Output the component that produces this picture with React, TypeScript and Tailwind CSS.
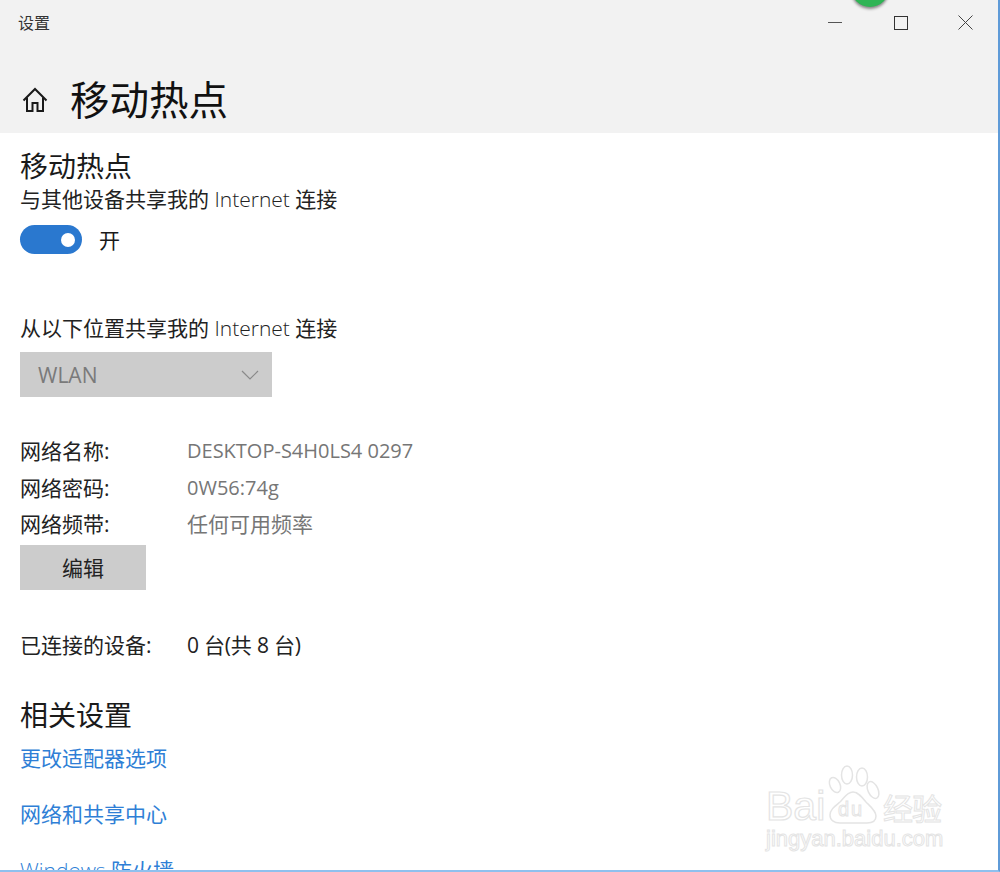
const infoRows = [
  { label: "网络名称:", value: "DESKTOP-S4H0LS4 0297", size: "text-[20px]" },
  { label: "网络密码:", value: "0W56:74g", size: "text-[20px]" },
  { label: "网络频带:", value: "任何可用频率", size: "text-[21px]" },
];

function HomeIcon() {
  return (
    <svg width="26" height="26" viewBox="0 0 26 26" fill="none" stroke="#1a1a1a" strokeWidth="2">
      <path d="M1.5 13.5 13 2l11.500 11.500" />
      <path d="M5 10.500V24h5.500v-8h5v8H21V10.500" />
    </svg>
  );
}

function Watermark() {
  return (
    <div className="pointer-events-none absolute left-[766px] top-[764px] h-[90px] w-[180px] text-transparent">
      <svg className="absolute left-[62px] top-0" width="56" height="64" viewBox="0 0 56 64" fill="none" stroke="#e4e4e4" strokeWidth="1.500">
        <ellipse cx="7" cy="21" rx="5" ry="8" transform="rotate(-25 7 21)" />
        <ellipse cx="19" cy="11" rx="5.500" ry="9" />
        <ellipse cx="34" cy="13" rx="5.500" ry="9" />
        <ellipse cx="45" cy="26" rx="5" ry="9" transform="rotate(-25 45 26)" />
        <path d="M25 28c5 0 9 5 13 10 5 5 10 9 10 14 0 5-4 7-9 7H12c-6 0-10-3-10-8 0-5 4-8 10-13 4-4 7-10 13-10z" />
      </svg>
      <span className="absolute left-0 top-[18px] font-['Liberation_Sans',sans-serif] text-[41px] leading-[48px] [-webkit-text-stroke:1.200px_#e4e4e4]">Bai</span>
      <span className="absolute left-[72px] top-[33px] font-['Liberation_Sans',sans-serif] text-[20px] leading-[24px] tracking-[2px] [-webkit-text-stroke:1px_#e4e4e4]">du</span>
      <span className="absolute left-[117px] top-[25px] font-['Noto_Sans_CJK_SC',sans-serif] text-[30px] leading-[36px] tracking-[-1px] [-webkit-text-stroke:1px_#e4e4e4]">经验</span>
      <span className="absolute left-0 top-[62px] font-['Liberation_Sans',sans-serif] text-[22px] leading-[26px] [-webkit-text-stroke:1px_#e4e4e4]">jingyan.baidu.com</span>
    </div>
  );
}

export default function App() {
  const link = "h-[28px] text-[21px] leading-[28px] text-[#2f7fd6]";

  return (
    <div className="relative h-[872px] w-[1000px] overflow-hidden border-r-2 border-b-2 border-r-[#5f9bd8] border-b-[#8fc0ee] bg-white font-['Open_Sans','Noto_Sans_CJK_SC',sans-serif] font-normal text-[#1a1a1a]">
      {/* green badge peeking in from the top edge */}
      <div className="absolute left-[851px] top-[-31px] h-[38px] w-[38px] rounded-full bg-[#2fb455] shadow-[0_2px_3px_rgba(0,0,0,0.45)]" />

      <header className="h-[133px] bg-[#f2f2f2]">
        <div className="flex h-[45px] items-center justify-between pl-[18px]">
          <span className="text-[16px] leading-[22px] text-[#333]">设置</span>
          <div className="flex items-center">
            <div className="flex h-[45px] w-[66px] items-center justify-center pr-[2px]">
              <div className="h-[1px] w-[14px] bg-[#555]" />
            </div>
            <div className="flex h-[45px] w-[64px] items-center justify-center">
              <div className="h-[14px] w-[14px] border border-[#333]" />
            </div>
            <div className="flex h-[45px] w-[65px] items-center justify-center">
              <svg width="15" height="15" viewBox="0 0 15 15" stroke="#444" strokeWidth="1">
                <path d="M.5.5l14 14M14.500.5l-14 14" />
              </svg>
            </div>
          </div>
        </div>
        <div className="flex h-[88px] items-center pl-[22px] pt-[22px]">
          <HomeIcon />
          <h1 className="ml-[22px] text-[39.500px] leading-[50px] text-[#111]">移动热点</h1>
        </div>
      </header>

      <main className="pl-[20px]">
        <h2 className="pt-[14px] text-[28px] leading-[38px]">移动热点</h2>
        <p className="text-[21px] leading-[28px] text-[#222]">与其他设备共享我的 <span className="font-light">Internet</span> 连接</p>
        <div className="mt-[12px] flex h-[29px] items-center">
          <div className="flex h-[29px] w-[62px] items-center justify-end rounded-full bg-[#2a78cf] pr-[7px]">
            <div className="h-[14px] w-[14px] rounded-full bg-white" />
          </div>
          <span className="ml-[17px] text-[21px] leading-[28px]">开</span>
        </div>

        <p className="mt-[60px] text-[21px] leading-[28px] text-[#222]">从以下位置共享我的 <span className="font-light">Internet</span> 连接</p>
        <div className="mt-[10px] flex h-[45px] w-[252px] items-center justify-between bg-[#cccccc] pl-[18px] pr-[13px]">
          <span className="text-[21px] leading-[28px] text-[#7a7a7a]">WLAN</span>
          <svg width="18" height="10" viewBox="0 0 18 10" fill="none" stroke="#8a8a8a" strokeWidth="1.200">
            <path d="M1 1l8 8 8-8" />
          </svg>
        </div>

        <div className="mt-[40px] flex flex-col gap-[8.500px]">
          {infoRows.map((row) => (
            <div key={row.label} className="flex h-[28px] items-center text-[21px] leading-[28px]">
              <span className="w-[167px] text-[#222]">{row.label}</span>
              <span className={`${row.size} text-[#767676]`}>{row.value}</span>
            </div>
          ))}
        </div>
        <button className="mt-[7px] h-[45px] w-[126px] bg-[#cccccc] text-[21px] leading-[28px] text-[#222]">编辑</button>

        <div className="mt-[41px] flex h-[28px] items-center text-[21px] leading-[28px] text-[#222]">
          <span className="w-[167px]">已连接的设备:</span>
          <span className="tracking-[-0.2px]">0 台(共 8 台)</span>
        </div>

        <h2 className="mt-[37px] text-[28px] leading-[38px]">相关设置</h2>
        <div className="mt-[10px] flex flex-col gap-[28px]">
          <a className={link}>更改适配器选项</a>
          <a className={link}>网络和共享中心</a>
          <a className={link}><span className="font-light">Windows</span> 防火墙</a>
        </div>
      </main>

      <Watermark />
    </div>
  );
}
